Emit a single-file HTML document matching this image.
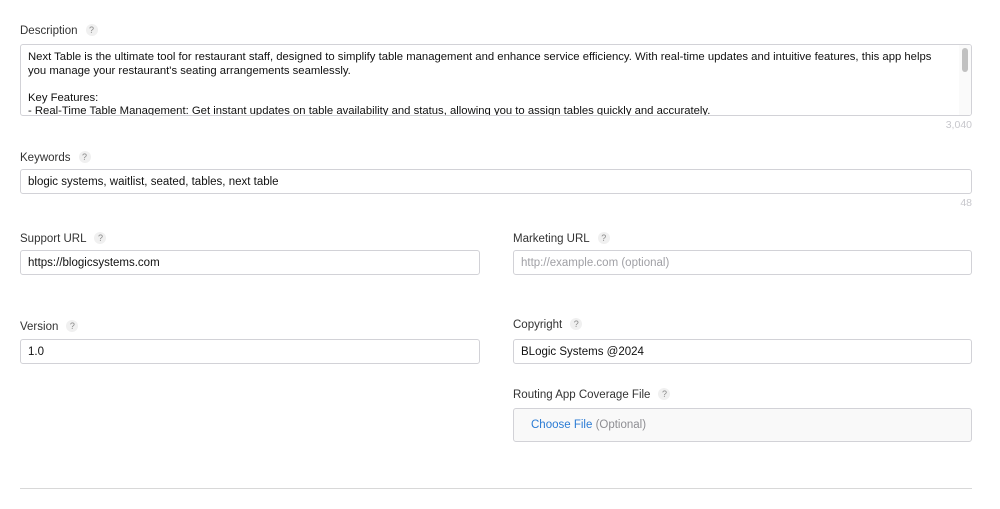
<!DOCTYPE html>
<html><head><meta charset="utf-8"><style>
body{margin:0;width:1000px;height:509px;background:#fff;font-family:"Liberation Sans",sans-serif;color:#1d1d1f;position:relative;overflow:hidden}
.a{position:absolute}
.lbl{font-size:11.5px;color:#333;white-space:nowrap}
.q{display:inline-block;width:12px;height:12px;border-radius:50%;background:#f0f0f0;color:#888;font-size:9px;text-align:center;line-height:12px;margin-left:8px;vertical-align:1px}
.box{position:absolute;border:1px solid #d2d2d7;border-radius:3px;background:#fff;box-sizing:border-box}
.t{font-size:11.5px;white-space:nowrap;position:absolute;color:#111}
.cnt{font-size:10.5px;color:#c7c7cc;text-align:right;position:absolute}
</style></head><body>
<div class="a lbl" style="left:20px;top:24px">Description<span class="q">?</span></div>
<div class="box" style="left:20px;top:44px;width:952px;height:72px;overflow:hidden">
<div class="t" style="left:7px;top:6px;line-height:13.5px;font-size:11.3px">Next Table is the ultimate tool for restaurant staff, designed to simplify table management and enhance service efficiency. With real-time updates and intuitive features, this app helps<br>you manage your restaurant's seating arrangements seamlessly.<br><br>Key Features:<br>- Real-Time Table Management: Get instant updates on table availability and status, allowing you to assign tables quickly and accurately.</div>
<div class="a" style="right:0;top:0;width:12px;height:70px;background:#fafafa"></div>
<div class="a" style="right:3px;top:3px;width:6px;height:24px;background:#c1c1c1;border-radius:3px"></div>
</div>
<div class="cnt" style="right:28px;top:119px">3,040</div>
<div class="a lbl" style="left:20px;top:151px">Keywords<span class="q">?</span></div>
<div class="box" style="left:20px;top:169px;width:952px;height:25px"><div class="t" style="left:7px;top:6px">blogic systems, waitlist, seated, tables, next table</div></div>
<div class="cnt" style="right:28px;top:197px">48</div>
<div class="a lbl" style="left:20px;top:232px">Support URL<span class="q">?</span></div>
<div class="box" style="left:20px;top:250px;width:460px;height:25px"><div class="t" style="left:7px;top:6px">https://blogicsystems.com</div></div>
<div class="a lbl" style="left:513px;top:232px">Marketing URL<span class="q">?</span></div>
<div class="box" style="left:513px;top:250px;width:459px;height:25px"><div class="t" style="left:7px;top:6px;color:#a0a0a5">http://example.com (optional)</div></div>
<div class="a lbl" style="left:20px;top:320px">Version<span class="q">?</span></div>
<div class="box" style="left:20px;top:339px;width:460px;height:25px"><div class="t" style="left:7px;top:6px">1.0</div></div>
<div class="a lbl" style="left:513px;top:318px">Copyright<span class="q">?</span></div>
<div class="box" style="left:513px;top:339px;width:459px;height:25px"><div class="t" style="left:7px;top:6px">BLogic Systems @2024</div></div>
<div class="a lbl" style="left:513px;top:388px">Routing App Coverage File<span class="q">?</span></div>
<div class="box" style="left:513px;top:408px;width:459px;height:34px;background:#f9f9f9"><div class="t" style="left:17px;top:10px;color:#2a7bd4">Choose File <span style="color:#8e8e93">(Optional)</span></div></div>
<div class="a" style="left:20px;top:488px;width:952px;height:1px;background:#d8d8d8"></div>
</body></html>
